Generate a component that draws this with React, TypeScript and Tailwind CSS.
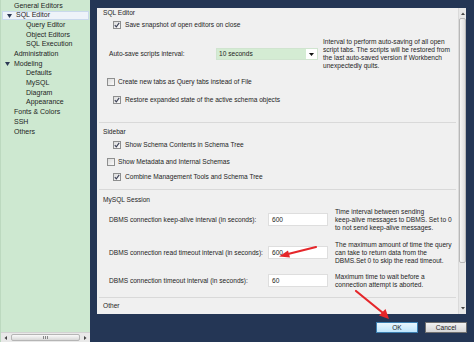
import React from 'react'

const tree = [
  { label: 'General Editors', level: 0 },
  { label: 'SQL Editor', level: 0, open: true, selected: true },
  { label: 'Query Editor', level: 1 },
  { label: 'Object Editors', level: 1 },
  { label: 'SQL Execution', level: 1 },
  { label: 'Administration', level: 0 },
  { label: 'Modeling', level: 0, open: true },
  { label: 'Defaults', level: 1 },
  { label: 'MySQL', level: 1 },
  { label: 'Diagram', level: 1 },
  { label: 'Appearance', level: 1 },
  { label: 'Fonts & Colors', level: 0 },
  { label: 'SSH', level: 0 },
  { label: 'Others', level: 0 },
]

function Box({ checked }: { checked?: boolean }) {
  return (
    <span className="w-[8px] h-[8px] shrink-0 border border-[#8e8f8f] bg-gradient-to-br from-[#dcdcdc] to-[#fbfbfb] flex items-center justify-center">
      {checked && (
        <svg width="6" height="6" viewBox="0 0 6 6">
          <path d="M0.8 3.2 L2.3 4.8 L5.2 0.9" fill="none" stroke="#3a3f55" strokeWidth="1.1" />
        </svg>
      )}
    </span>
  )
}

function Check({ label, checked, className }: { label: string; checked?: boolean; className: string }) {
  return (
    <div className={`h-[10px] flex items-center ${checked ? 'pl-[16px] gap-[4px]' : 'pl-[10px] gap-[3px]'} ${className}`}>
      <Box checked={checked} />
      <span>{label}</span>
    </div>
  )
}

function Header({ label, className }: { label: string; className: string }) {
  return <div className={`h-[9px] flex items-center pl-[6px] ${className}`}>{label}</div>
}

function Line({ className }: { className: string }) {
  return <div className={`h-px bg-[#d9d9d9] mx-[2px] ${className}`} />
}

function Field({ label, value, desc, className }: { label: string; value: string; desc: string[]; className: string }) {
  return (
    <div className={`h-[13px] flex items-center pl-[12px] ${className}`}>
      <span className="w-[159px]">{label}</span>
      <span className="w-[60px] h-[13px] bg-white border border-[#dedede] flex items-center pl-[3px]">{value}</span>
      <div className="ml-[7px] leading-[8px]">
        {desc.map(d => (
          <div key={d}>{d}</div>
        ))}
      </div>
    </div>
  )
}

export default function App() {
  return (
    <div className="relative w-[474px] h-[342px] overflow-hidden bg-[#243655] flex font-['Liberation_Sans',Arial,sans-serif] text-[#1e1e1e]">
      {/* tree */}
      <div className="w-[90px] h-full bg-[#cde8d0] border-l border-[#bcd9bf] flex flex-col text-[7px]">
        <div className="flex-1 pt-[1px]">
          {tree.map(t => (
            <div
              key={t.label}
              className={`h-[9.7px] flex items-center ${t.selected ? 'bg-[#eef3f9] border border-[#c9d9ec] mx-[1px]' : ''}`}
            >
              <span className="w-[12px] flex justify-center">
                {t.open && (
                  <svg width="5" height="4" viewBox="0 0 5 4">
                    <path d="M0 0 H5 L2.5 4 Z" fill="#2d3a55" />
                  </svg>
                )}
              </span>
              <span className={t.level ? 'pl-[13px]' : 'pl-[1px]'}>{t.label}</span>
            </div>
          ))}
        </div>
        <div className="h-[10px] bg-[#e9e9e9] border-t border-[#d2d2d2] flex items-center px-[2px] gap-[2px]">
          <svg width="6" height="6" viewBox="0 0 6 6">
            <path d="M4 1 L1.5 3 L4 5 Z" fill="#444" />
          </svg>
          <div className="flex-1 h-[7px] rounded-[2px] border border-[#b5b5b5] bg-gradient-to-b from-[#fafafa] to-[#d8d8d8] flex items-center justify-center">
            <span className="w-[5px] h-[3px] border-x border-[#888] flex justify-center">
              <span className="w-px h-full bg-[#888]" />
            </span>
          </div>
          <svg width="6" height="6" viewBox="0 0 6 6">
            <path d="M2 1 L4.5 3 L2 5 Z" fill="#444" />
          </svg>
        </div>
      </div>

      <div className="w-[7px]" />

      {/* right side */}
      <div className="w-[377px] flex flex-col">
        <div className="h-[8px]" />
        <div className="w-[369px] h-[306px] bg-[#f0f0f0] flex text-[6.6px]">
          <div className="flex-1 flex flex-col">
            <Header label="SQL Editor" className="" />
            <Check label="Save snapshot of open editors on close" checked className="mt-[3px]" />
            <div className="h-[12px] mt-[18px] flex items-center pl-[12px]">
              <span className="w-[107px]">Auto-save scripts interval:</span>
              <div className="w-[102px] h-[12px] flex border border-[#d0e4cf]">
                <span className="flex-1 bg-[#d4ecd3] flex items-center pl-[2px]">10 seconds</span>
                <span className="w-[11px] bg-white flex items-center justify-center">
                  <svg width="5" height="3" viewBox="0 0 5 3">
                    <path d="M0 0 H5 L2.5 3 Z" fill="#111" />
                  </svg>
                </span>
              </div>
              <div className="ml-[5px] leading-[8px]">
                <div>Interval to perform auto-saving of all open</div>
                <div>script tabs. The scripts will be restored from</div>
                <div>the last auto-saved version if Workbench</div>
                <div>unexpectedly quits.</div>
              </div>
            </div>
            <Check label="Create new tabs as Query tabs instead of File" className="mt-[17px]" />
            <Check label="Restore expanded state of the active schema objects" checked className="mt-[8px]" />
            <Line className="mt-[17px]" />

            <Header label="Sidebar" className="mt-[4px]" />
            <Check label="Show Schema Contents in Schema Tree" checked className="mt-[4px]" />
            <Check label="Show Metadata and Internal Schemas" className="mt-[7px]" />
            <Check label="Combine Management Tools and Schema Tree" checked className="mt-[5px]" />
            <Line className="mt-[7px]" />

            <Header label="MySQL Session" className="mt-[5px]" />
            <Field
              label="DBMS connection keep-alive interval (in seconds):"
              value="600"
              desc={['Time interval between sending', 'keep-alive messages to DBMS. Set to 0', 'to not send keep-alive messages.']}
              className="mt-[9px]"
            />
            <Field
              label="DBMS connection read timeout interval (in seconds):"
              value="600"
              desc={['The maximum amount of time the query', 'can take to return data from the', 'DBMS.Set 0 to skip the read timeout.']}
              className="mt-[20px]"
            />
            <Field
              label="DBMS connection timeout interval (in seconds):"
              value="60"
              desc={['Maximum time to wait before a', 'connection attempt is aborted.']}
              className="mt-[15px]"
            />
            <Line className="mt-[10px]" />
            <Header label="Other" className="mt-[3px]" />
          </div>

          {/* vertical scrollbar */}
          <div className="w-[8px] bg-[#e8e8e8] border-l border-[#dadada] flex flex-col items-center">
            <svg width="6" height="8" viewBox="0 0 6 8" className="mt-[2px]">
              <path d="M1 5 L3 2.5 L5 5 Z" fill="#444" />
            </svg>
            <div className="w-[7px] h-[245px] rounded-[2px] border border-[#b8b8b8] bg-gradient-to-r from-[#f7f7f7] to-[#dedede]" />
            <div className="flex-1" />
            <svg width="6" height="8" viewBox="0 0 6 8" className="mb-[2px]">
              <path d="M1 3 L3 5.5 L5 3 Z" fill="#444" />
            </svg>
          </div>
        </div>

        <div className="flex justify-end gap-[7px] pr-[7px] pt-[8px] text-[6.6px]">
          <button className="w-[42px] h-[11px] border border-[#3c7fb1] bg-gradient-to-b from-[#eaf6fd] to-[#bee6fd] flex items-center justify-center text-[#1e1e1e]">
            OK
          </button>
          <button className="w-[42px] h-[11px] border border-[#707070] bg-gradient-to-b from-[#f2f2f2] to-[#d6d6d6] flex items-center justify-center text-[#1e1e1e]">
            Cancel
          </button>
        </div>
      </div>

      {/* annotation arrows */}
      <svg className="absolute inset-0 pointer-events-none" width="474" height="342" viewBox="0 0 474 342">
        <path d="M316 247 L286 254.5" stroke="#e5262a" strokeWidth="2.2" strokeLinecap="round" />
        <path d="M279 256.5 L288 250.5 L290 257.5 Z" fill="#e5262a" />
        <path d="M356 291 L383 313" stroke="#e5262a" strokeWidth="2.2" strokeLinecap="round" />
        <path d="M389 319 L379 315.5 L385.5 309 Z" fill="#e5262a" />
      </svg>
    </div>
  )
}
